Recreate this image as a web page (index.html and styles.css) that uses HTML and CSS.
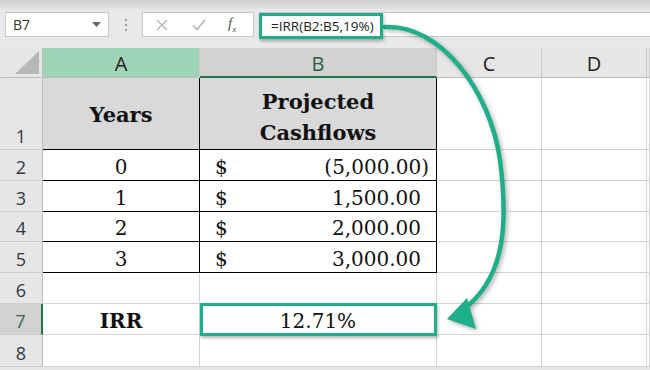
FILE: index.html
```html
<!DOCTYPE html>
<html lang="en">
<head>
  <meta charset="UTF-8">
  <title>IRR</title>
  <link rel="stylesheet" href="styles.css">
</head>
<body>
  <div class="app">
    <div class="toolbar">
      <div class="namebox">
        <span>B7</span>
        <svg class="drop" width="9" height="5" viewBox="0 0 9 5"><polygon points="0,0 9,0 4.5,5" fill="#666"/></svg>
      </div>
      <div class="grip"><i></i><i></i><i></i></div>
      <div class="fxbuttons">
        <svg class="btn" width="12" height="12" viewBox="0 0 12 12"><path d="M1 1 L11 11 M11 1 L1 11" stroke="#b4b4b4" stroke-width="1.4" fill="none"/></svg>
        <svg class="btn" width="14" height="12" viewBox="0 0 14 12"><path d="M1 6.5 L5 10.5 L13 1" stroke="#b4b4b4" stroke-width="1.6" fill="none"/></svg>
        <span class="fx">f<sub>x</sub></span>
      </div>
      <div class="formula">
        <span class="formula-text">=IRR(B2:B5,19%)</span>
      </div>
    </div>

    <div class="sheet">
      <!-- header row -->
      <div class="corner"><svg width="24" height="23" viewBox="0 0 24 23"><polygon points="24,0 24,23 0,23" fill="#b7b7b7"/></svg></div>
      <div class="ch ch-a">A</div>
      <div class="ch ch-sel">B</div>
      <div class="ch">C</div>
      <div class="ch">D</div>
      <div class="ch"></div>

      <!-- row 1 -->
      <div class="rh">1</div>
      <div class="c tb head">Years</div>
      <div class="c tb head two">Projected<br>Cashflows</div>
      <div class="c"></div><div class="c"></div><div class="c"></div>

      <!-- row 2 -->
      <div class="rh">2</div>
      <div class="c tb num">0</div>
      <div class="c tb money"><span>$</span><span>(5,000.00)</span></div>
      <div class="c"></div><div class="c"></div><div class="c"></div>

      <!-- row 3 -->
      <div class="rh">3</div>
      <div class="c tb num">1</div>
      <div class="c tb money"><span>$</span><span class="pos">1,500.00</span></div>
      <div class="c"></div><div class="c"></div><div class="c"></div>

      <!-- row 4 -->
      <div class="rh">4</div>
      <div class="c tb num">2</div>
      <div class="c tb money"><span>$</span><span class="pos">2,000.00</span></div>
      <div class="c"></div><div class="c"></div><div class="c"></div>

      <!-- row 5 -->
      <div class="rh">5</div>
      <div class="c tb num">3</div>
      <div class="c tb money"><span>$</span><span class="pos">3,000.00</span></div>
      <div class="c"></div><div class="c"></div><div class="c"></div>

      <!-- row 6 -->
      <div class="rh">6</div>
      <div class="c"></div><div class="c"></div><div class="c"></div><div class="c"></div><div class="c"></div>

      <!-- row 7 -->
      <div class="rh rh-sel">7</div>
      <div class="c num bold">IRR</div>
      <div class="c num selected">12.71%</div>
      <div class="c"></div><div class="c"></div><div class="c"></div>

      <!-- row 8 -->
      <div class="rh">8</div>
      <div class="c"></div><div class="c"></div><div class="c"></div><div class="c"></div><div class="c"></div>
    </div>

    <svg class="arrow" width="650" height="370" viewBox="0 0 650 370">
      <path d="M385 27 C440 24, 490 90, 500 160 C508 222, 505 272, 470 304" fill="none" stroke="#1fae8a" stroke-width="4.5" stroke-linecap="round"/>
      <polygon points="447,319 467,298 476,329" fill="#1fae8a"/>
    </svg>
  </div>
</body>
</html>
```

FILE: styles.css
```css
* {
  margin: 0;
  padding: 0;
  box-sizing: border-box;
}

body {
  background-color: #e6e6e6;
  font-family: 'Open Sans', 'Noto Sans', sans-serif;
}

.app {
  position: relative;
  width: 650px;
  height: 370px;
  overflow: hidden;
}

/* formula bar area */
.toolbar {
  display: flex;
  align-items: flex-start;
  height: 48px;
  padding: 12px 0 0 5px;
  background: linear-gradient(#cfcfcf 0px, #e9e9e9 11px, #e8e8e8 100%);
}

.namebox {
  display: flex;
  align-items: center;
  justify-content: space-between;
  width: 104px;
  height: 25px;
  padding: 0 7px 0 7px;
  background-color: white;
  border: 1px solid #c8c8c8;
  font-size: 14px;
  color: #333;
}

.grip {
  display: flex;
  flex-direction: column;
  align-items: center;
  justify-content: center;
  gap: 3px;
  width: 33px;
  height: 25px;
}

.grip i {
  width: 2px;
  height: 2px;
  background-color: #9a9a9a;
}

.fxbuttons {
  display: flex;
  align-items: center;
  width: 112px;
  height: 25px;
  padding-left: 13px;
  gap: 24px;
  background-color: white;
  border: 1px solid #c8c8c8;
}

.fx {
  font-family: 'Liberation Serif', serif;
  font-style: italic;
  font-size: 15px;
  color: #555;
  margin-left: -2px;
}

.fx sub {
  font-size: 9px;
}

.formula {
  flex: 1;
  height: 25px;
  margin-left: 5px;
  background-color: white;
  border-top: 1px solid #c8c8c8;
  border-bottom: 1px solid #c8c8c8;
  border-left: 1px solid #c8c8c8;
}

.formula-text {
  display: inline-block;
  height: 26px;
  margin: 0 0 0 -1px;
  padding: 0 6px 0 9px;
  border: 3px solid #1fae8a;
  font-size: 13.5px;
  line-height: 20px;
  color: #222;
  background-color: white;
  box-shadow: 1px 2px 3px rgba(0, 0, 0, 0.3);
  position: relative;
  z-index: 2;
}

/* grid */
.sheet {
  display: grid;
  grid-template-columns: 43px 157px 237px 105px 105px 1fr;
  grid-template-rows: 30px 72px 31px 31px 30px 31px 31px 31px 32px;
  background-color: white;
}

.corner {
  display: flex;
  align-items: flex-end;
  justify-content: flex-end;
  padding: 0 3px 3px 0;
  background-color: #e6e6e6;
  border-right: 1px solid #bdbdbd;
  border-bottom: 1px solid #bdbdbd;
}

.ch {
  display: flex;
  align-items: center;
  justify-content: center;
  background-color: #e6e6e6;
  border-right: 1px solid #cacaca;
  border-bottom: 1px solid #bdbdbd;
  font-size: 20px;
  color: #222;
  padding-top: 2px;
}

.ch-a {
  background-color: #9fd5b7;
}

.ch-sel {
  background-color: #d2d2d2;
  border-bottom: 2px solid #217346;
  color: #2b5f47;
}

.rh {
  display: flex;
  align-items: flex-end;
  justify-content: center;
  padding-bottom: 1px;
  background-color: #e6e6e6;
  border-right: 1px solid #bdbdbd;
  border-bottom: 1px solid #cfcfcf;
  font-size: 18px;
  line-height: 24px;
  color: #2f3a45;
}

.rh-sel {
  background-color: #d2d2d2;
  border-right: 2px solid #217346;
  color: #3a6652;
}

.c {
  display: flex;
  align-items: flex-end;
  border-right: 1px solid #d4d4d4;
  border-bottom: 1px solid #d4d4d4;
  font-family: 'DejaVu Serif', 'Liberation Serif', serif;
  font-size: 20px;
  line-height: 26px;
  color: #111;
}

.c.tb {
  border-right-color: #000;
  border-bottom-color: #000;
}

.head {
  align-items: center;
  justify-content: center;
  background-color: #d9d9d9;
  font-weight: bold;
  font-size: 21px;
  text-align: center;
  padding-top: 3px;
}

.head.two {
  line-height: 31px;
  padding-top: 6px;
}

.num {
  justify-content: center;
}

.bold {
  font-weight: bold;
}

.money {
  justify-content: space-between;
  padding: 0 7px 0 15px;
}

.money .pos {
  padding-right: 8px;
}

.selected {
  position: relative;
}

.selected::after {
  content: "";
  position: absolute;
  left: 0;
  top: -1px;
  right: -1px;
  bottom: -2px;
  border: 3px solid #1fae8a;
  box-shadow: 1px 2px 3px rgba(0, 0, 0, 0.3);
}

.arrow {
  position: absolute;
  left: 0;
  top: 0;
  pointer-events: none;
  filter: drop-shadow(2px 2px 2px rgba(0, 0, 0, 0.3));
}
```
